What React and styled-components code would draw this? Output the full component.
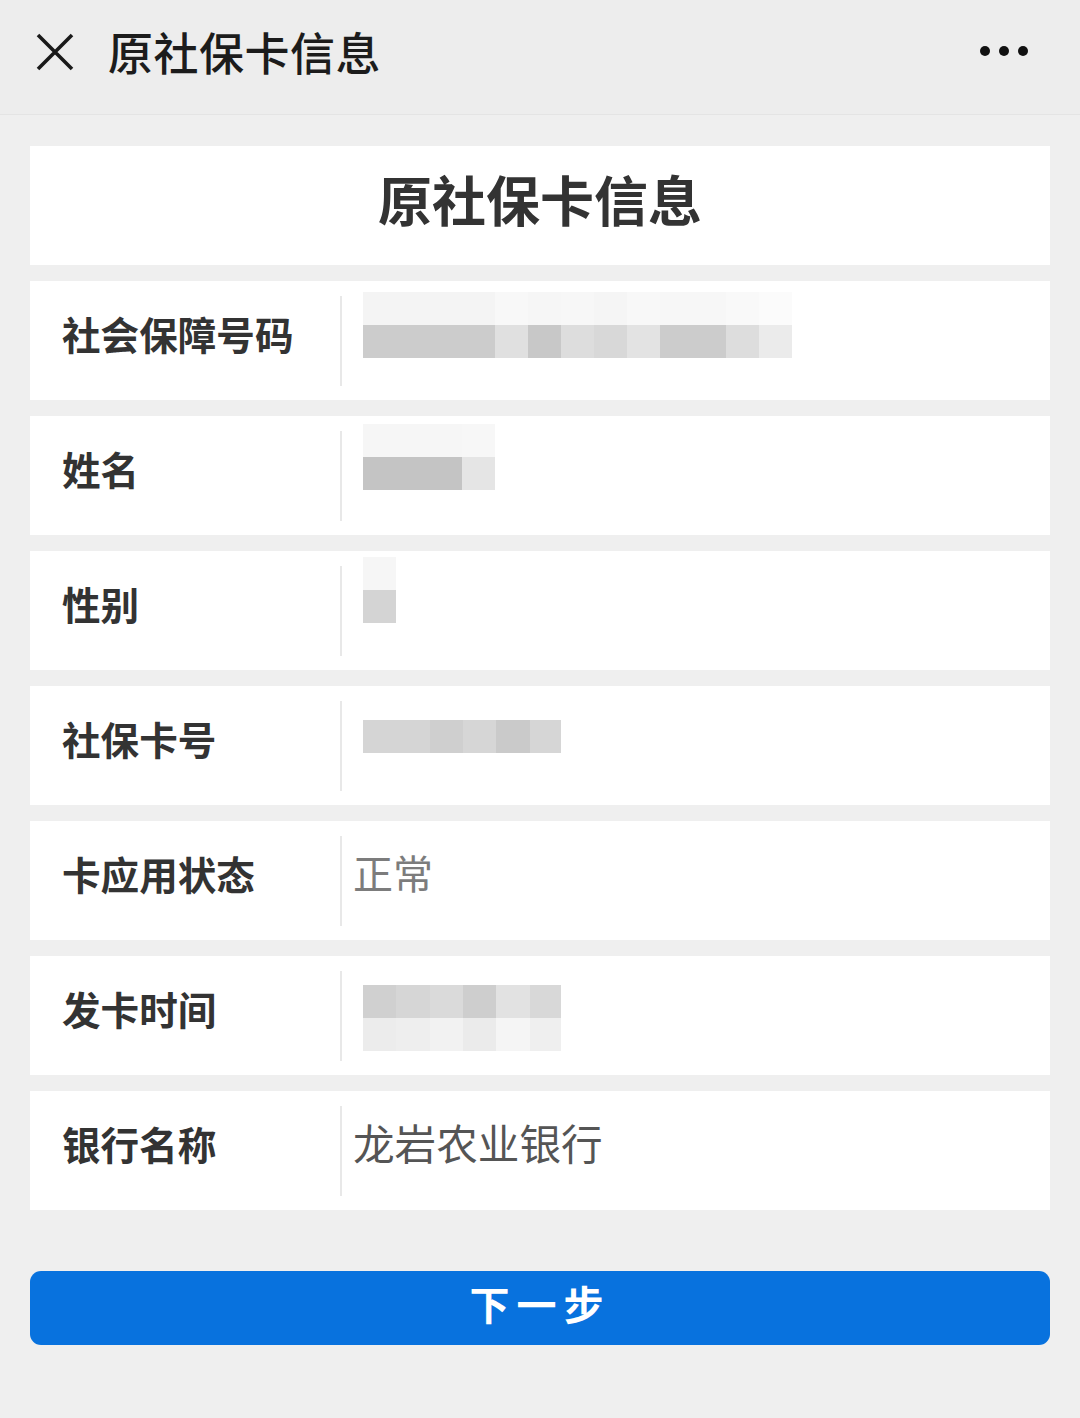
import React from "react";
import styled, { createGlobalStyle } from "styled-components";

const GlobalStyle = createGlobalStyle`
  html, body {
    margin: 0;
    padding: 0;
    background: #efefef;
  }
  body {
    font-family: "Noto Sans CJK SC", "Noto Sans", sans-serif;
    color: #333;
  }
`;

const Page = styled.div`
  width: 1080px;
  min-height: 1418px;
  background: #efefef;
`;

const TopBar = styled.div`
  height: 114px;
  display: flex;
  align-items: center;
  padding: 0 36px;
  background: #ededed;
  border-bottom: 1px solid #e4e4e4;
  box-sizing: content-box;
`;

const CloseBtn = styled.div`
  width: 38px;
  height: 38px;
  display: flex;
  margin-top: -10px;
  svg {
    display: block;
  }
`;

const TopTitle = styled.div`
  margin-left: 34px;
  font-size: 45px;
  font-weight: 500;
  color: #1c1c1c;
  letter-spacing: 0.5px;
  margin-top: -12px;
  flex: 1;
`;

const MoreBtn = styled.div`
  display: flex;
  gap: 9px;
  margin-right: 16px;
  margin-top: -12px;
  span {
    width: 10px;
    height: 10px;
    border-radius: 50%;
    background: #111;
  }
`;

const Content = styled.div`
  padding: 31px 30px 0;
  display: flex;
  flex-direction: column;
  gap: 16px;
`;

const TitleCard = styled.div`
  height: 119px;
  background: #fff;
  display: flex;
  align-items: center;
  justify-content: center;
  font-size: 54px;
  font-weight: 700;
  color: #333;
  padding-bottom: 14px;
  box-sizing: border-box;
`;

const Row = styled.div`
  height: 119px;
  background: #fff;
  display: flex;
  align-items: center;
`;

const Label = styled.div`
  width: 310px;
  padding-left: 32px;
  box-sizing: border-box;
  font-size: 38.6px;
  font-weight: 700;
  color: #333;
  margin-top: -16px;
`;

const Divider = styled.div`
  width: 2px;
  height: 90px;
  background: #e8e8e8;
`;

const Value = styled.div`
  flex: 1;
  padding-left: 11px;
  font-size: ${(p) => (p.$muted ? 40 : 41.6)}px;
  color: ${(p) => (p.$muted ? "#7c7c7c" : "#555")};
  margin-top: -18px;
`;

const MosaicWrap = styled.div`
  flex: 1;
  padding-left: ${(p) => p.$offset}px;
  display: flex;
  flex-direction: column;
  margin-top: ${(p) => p.$shift}px;
`;

const MosaicLine = styled.div`
  display: flex;
  height: 33px;
`;

const Tile = styled.div`
  height: 100%;
`;

const NextButton = styled.button`
  margin: 45px 0 0;
  height: 74px;
  border: none;
  border-radius: 11px;
  background: #0872de;
  color: #fff;
  font-family: "Noto Sans CJK SC", "Noto Sans", sans-serif;
  font-size: 40px;
  font-weight: 700;
  letter-spacing: 7px;
  padding-bottom: 12px;
`;

// blurred values: each line is a list of [width, grey level]
const mosaics = {
  ssn: {
    offset: 21,
    shift: -32,
    lines: [
      [[132, 244], [33, 248], [33, 246], [33, 247], [33, 245], [33, 248], [66, 247], [33, 249], [33, 251]],
      [[132, 204], [33, 224], [33, 200], [33, 221], [33, 216], [33, 227], [66, 204], [33, 221], [33, 235]],
    ],
  },
  name: {
    offset: 21,
    shift: -38,
    lines: [
      [[99, 246], [33, 247]],
      [[99, 196], [33, 229]],
    ],
  },
  gender: {
    offset: 21,
    shift: -42,
    lines: [
      [[33, 246]],
      [[33, 212]],
    ],
  },
  card: {
    offset: 21,
    shift: -18,
    lines: [[[67, 213], [33, 207], [33, 214], [34, 202], [31, 214]]],
  },
  issued: {
    offset: 21,
    shift: 4,
    lines: [
      [[33, 208], [34, 214], [33, 218], [33, 206], [34, 226], [31, 216]],
      [[33, 236], [34, 238], [33, 242], [33, 235], [34, 245], [31, 239]],
    ],
  },
};

function Mosaic({ data }) {
  return (
    <MosaicWrap $offset={data.offset} $shift={data.shift}>
      {data.lines.map((line, i) => (
        <MosaicLine key={i}>
          {line.map(([w, g], j) => (
            <Tile key={j} style={{ width: w, background: `rgb(${g},${g},${g})` }} />
          ))}
        </MosaicLine>
      ))}
    </MosaicWrap>
  );
}

const rows = [
  { label: "社会保障号码", mosaic: mosaics.ssn },
  { label: "姓名", mosaic: mosaics.name },
  { label: "性别", mosaic: mosaics.gender },
  { label: "社保卡号", mosaic: mosaics.card },
  { label: "卡应用状态", value: "正常", muted: true },
  { label: "发卡时间", mosaic: mosaics.issued },
  { label: "银行名称", value: "龙岩农业银行" },
];

export default function App() {
  return (
    <Page>
      <GlobalStyle />
      <TopBar>
        <CloseBtn>
          <svg width="38" height="38" viewBox="0 0 38 38">
            <path d="M2 2 L36 36 M36 2 L2 36" stroke="#1a1a1a" strokeWidth="3.6" />
          </svg>
        </CloseBtn>
        <TopTitle>原社保卡信息</TopTitle>
        <MoreBtn>
          <span />
          <span />
          <span />
        </MoreBtn>
      </TopBar>
      <Content>
        <TitleCard>原社保卡信息</TitleCard>
        {rows.map((r) => (
          <Row key={r.label}>
            <Label>{r.label}</Label>
            <Divider />
            {r.mosaic ? <Mosaic data={r.mosaic} /> : <Value $muted={r.muted}>{r.value}</Value>}
          </Row>
        ))}
        <NextButton>下一步</NextButton>
      </Content>
    </Page>
  );
}
